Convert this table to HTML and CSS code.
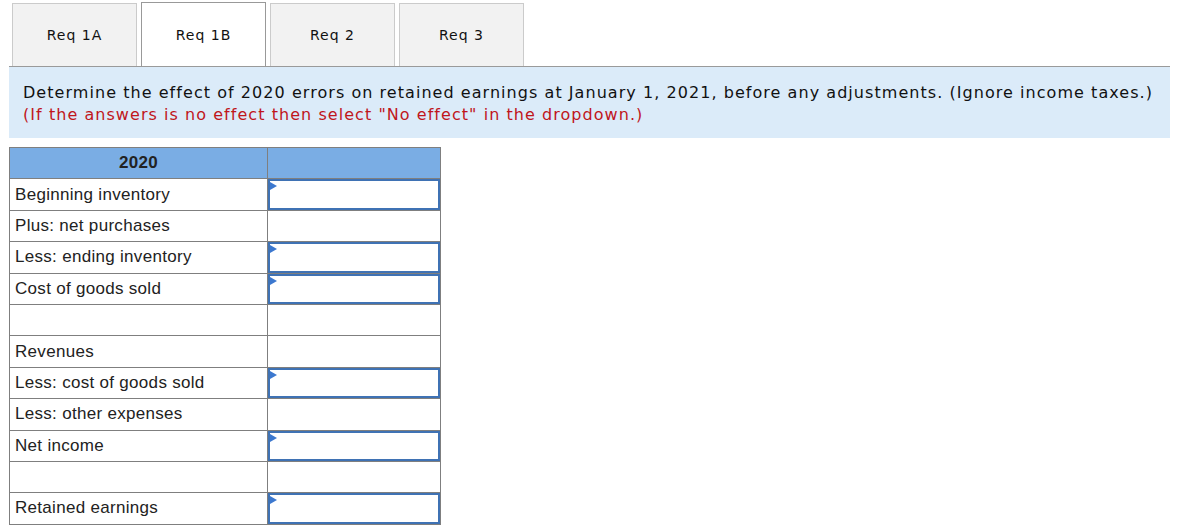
FILE: index.html
```html
<!DOCTYPE html>
<html>
<head>
<meta charset="utf-8">
<link rel="stylesheet" href="styles.css">
</head>
<body>
<div class="tabs">
  <div class="tab">Req 1A</div>
  <div class="tab active">Req 1B</div>
  <div class="tab">Req 2</div>
  <div class="tab">Req 3</div>
</div>
<div class="panel">
  <div class="q">Determine the effect of 2020 errors on retained earnings at January 1, 2021, before any adjustments. (Ignore income taxes.)</div>
  <div class="note">(If the answers is no effect then select "No effect" in the dropdown.)</div>
</div>
<table class="grid">
  <tr class="head"><th>2020</th><th></th></tr>
  <tr><td>Beginning inventory</td><td class="inp"><div class="box"></div></td></tr>
  <tr><td>Plus: net purchases</td><td></td></tr>
  <tr><td>Less: ending inventory</td><td class="inp"><div class="box"></div></td></tr>
  <tr><td>Cost of goods sold</td><td class="inp"><div class="box"></div></td></tr>
  <tr><td></td><td></td></tr>
  <tr><td>Revenues</td><td></td></tr>
  <tr><td>Less: cost of goods sold</td><td class="inp"><div class="box"></div></td></tr>
  <tr><td>Less: other expenses</td><td></td></tr>
  <tr><td>Net income</td><td class="inp"><div class="box"></div></td></tr>
  <tr><td></td><td></td></tr>
  <tr><td>Retained earnings</td><td class="inp"><div class="box"></div></td></tr>
</table>
</body>
</html>
```
FILE: styles.css
```css
body {
  margin: 0;
  background: #fff;
  font-family: "DejaVu Sans", Verdana, sans-serif;
}
.tabs {
  display: flex;
  align-items: flex-end;
  gap: 4px;
  padding-left: 12px;
  height: 66px;
}
.tab {
  width: 125px;
  height: 63px;
  box-sizing: border-box;
  background: #f2f2f2;
  border: 1px solid #cbcbcb;
  border-bottom: none;
  display: flex;
  align-items: center;
  justify-content: center;
  font-size: 14px;
  letter-spacing: 1px;
  color: #111;
  padding-bottom: 0;
}
.tab.active {
  background: #fff;
  border-color: #999;
  height: 64px;
  padding-top: 1px;
}
.panel {
  margin: 0 22px 0 9px;
  background: #dbebf9;
  border-top: 1px solid #9a9a9a;
  padding: 15px 14px 12px;
  font-size: 16px;
  line-height: 22px;
  letter-spacing: 1.05px;
  color: #111;
}
.note {
  color: #c0161c;
}
.grid {
  margin: 9px 0 0 9px;
  border-collapse: collapse;
  font-family: "Liberation Sans", Arial, sans-serif;
  font-size: 17px;
  letter-spacing: 0.3px;
  color: #222;
}
.grid th, .grid td {
  border: 1px solid #7f7f7f;
  padding: 0;
  height: 30px;
  box-sizing: border-box;
}
.grid tr {
  height: 31.4px;
}
.grid th {
  background: #7aade4;
  font-weight: bold;
  text-align: center;
}
.grid th:first-child, .grid td:first-child {
  width: 258px;
}
.grid th:last-child, .grid td:last-child {
  width: 173px;
}
.grid td:first-child {
  padding-left: 5px;
}
.grid td.inp {
  position: relative;
}
.box {
  position: absolute;
  inset: 0;
  border: 2px solid #3f72b4;
  box-sizing: border-box;
}
.box::before {
  content: "";
  position: absolute;
  left: 0;
  top: 1px;
  border-left: 7px solid #3c78cf;
  border-top: 4px solid transparent;
  border-bottom: 4px solid transparent;
}
```
